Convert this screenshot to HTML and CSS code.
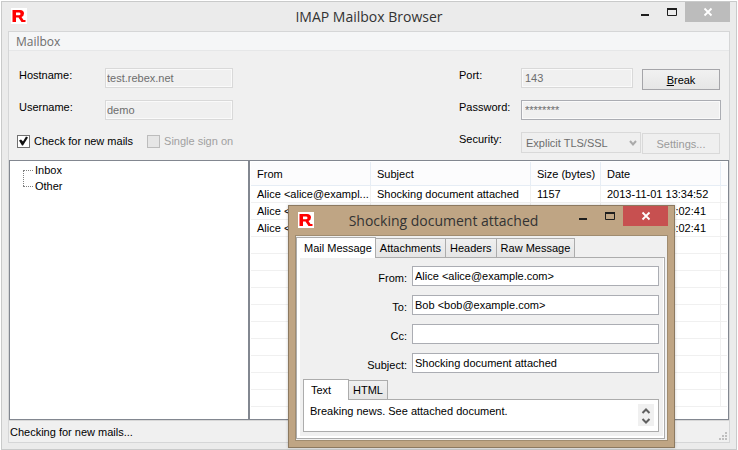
FILE: index.html
```html
<!DOCTYPE html>
<html lang="en">
<head>
<meta charset="utf-8">
<title>IMAP Mailbox Browser</title>
<link rel="stylesheet" href="styles.css">
</head>
<body>
<main class="window">
  <header class="titlebar">
    <svg class="logo" viewBox="0 0 16 16" aria-hidden="true"><path class="logo-bg" d="M0 0h16v16H0z"/><path class="logo-mark" fill-rule="evenodd" d="M1.500 2H9Q13 2 13 5.500Q13 8 10.500 9L12.500 12H14.500v2H10.500L7.500 9.500H5V14H1.500zM5 4.500V7.300H8Q9.500 7.300 9.500 5.900Q9.500 4.500 8 4.500z"/></svg>
    <h1 class="title">IMAP Mailbox Browser</h1>
    <div class="caption-buttons">
      <button class="caption" aria-label="Minimize"><svg viewBox="0 0 10 10"><path d="M1 8h8" stroke-width="2"/></svg></button>
      <button class="caption" aria-label="Maximize"><svg viewBox="0 0 10 10"><path d="M.5 1v7.500h9V1" /><path d="M0 2h10" stroke-width="2"/></svg></button>
      <button class="caption close" aria-label="Close"><svg viewBox="0 0 10 10"><path d="M1.500 1.500l7 7m0-7l-7 7" stroke-width="1.800"/></svg></button>
    </div>
  </header>
  <div class="frame">
    <nav class="menubar"><button class="menu" disabled>Mailbox</button></nav>
    <form class="connection">
      <div class="account">
        <label for="host">Hostname:</label><input id="host" class="field" value="test.rebex.net" disabled>
        <label for="user">Username:</label><input id="user" class="field" value="demo" disabled>
        <div class="checks">
          <label class="check"><input type="checkbox" checked>Check for new mails</label>
          <label class="check off"><input type="checkbox" disabled>Single sign on</label>
        </div>
      </div>
      <div class="server">
        <label for="port">Port:</label><input id="port" class="field port" value="143" disabled>
        <button type="button" class="button"><u>B</u>reak</button>
        <label for="pass">Password:</label><input id="pass" class="field password" value="********" readonly>
        <label for="security">Security:</label>
        <div class="select"><select id="security" disabled><option>Explicit TLS/SSL</option></select><svg viewBox="0 0 8 8" aria-hidden="true"><path d="M1 2l3 3.500L7 2"/></svg></div>
        <button type="button" class="button" disabled>Settings...</button>
      </div>
    </form>
    <div class="panes">
      <ul class="tree"><li>Inbox</li><li>Other</li></ul>
      <div class="list">
        <table class="messages">
          <colgroup><col class="c-from"><col class="c-subject"><col class="c-size"><col class="c-date"><col></colgroup>
          <thead><tr><th>From</th><th>Subject</th><th>Size (bytes)</th><th>Date</th><th></th></tr></thead>
          <tbody>
            <tr><td>Alice &lt;alice@exampl...</td><td>Shocking document attached</td><td>1157</td><td>2013-11-01 13:34:52</td><td></td></tr>
            <tr><td>Alice &lt;</td><td></td><td></td><td class="tail">3:02:41</td><td></td></tr>
            <tr><td>Alice &lt;</td><td></td><td></td><td class="tail">3:02:41</td><td></td></tr>
            <tr><td></td><td></td><td></td><td></td><td></td></tr>
            <tr><td></td><td></td><td></td><td></td><td></td></tr>
            <tr><td></td><td></td><td></td><td></td><td></td></tr>
            <tr><td></td><td></td><td></td><td></td><td></td></tr>
            <tr><td></td><td></td><td></td><td></td><td></td></tr>
            <tr><td></td><td></td><td></td><td></td><td></td></tr>
            <tr><td></td><td></td><td></td><td></td><td></td></tr>
            <tr><td></td><td></td><td></td><td></td><td></td></tr>
            <tr><td></td><td></td><td></td><td></td><td></td></tr>
            <tr><td></td><td></td><td></td><td></td><td></td></tr>
          </tbody>
        </table>
      </div>
    </div>
    <footer class="status"><span>Checking for new mails...</span>
      <svg class="grip" viewBox="0 0 8 8" aria-hidden="true"><path d="M6 0h2v2H6zM3 3h2v2H3zM6 3h2v2H6zM0 6h2v2H0zM3 6h2v2H3zM6 6h2v2H6z"/></svg>
    </footer>
  </div>
</main>

<section class="dialog" role="dialog" aria-labelledby="dialog-title">
  <header class="titlebar">
    <svg class="logo" viewBox="0 0 16 16" aria-hidden="true"><path class="logo-bg" d="M0 0h16v16H0z"/><path class="logo-mark" fill-rule="evenodd" d="M1.500 2H9Q13 2 13 5.500Q13 8 10.500 9L12.500 12H14.500v2H10.500L7.500 9.500H5V14H1.500zM5 4.500V7.300H8Q9.500 7.300 9.500 5.900Q9.500 4.500 8 4.500z"/></svg>
    <h2 class="title" id="dialog-title">Shocking document attached</h2>
    <div class="caption-buttons">
      <button class="caption" aria-label="Minimize"><svg viewBox="0 0 10 10"><path d="M1 8h8" stroke-width="2"/></svg></button>
      <button class="caption" aria-label="Maximize"><svg viewBox="0 0 10 10"><path d="M.5 1v7.500h9V1" /><path d="M0 2h10" stroke-width="2"/></svg></button>
      <button class="caption close" aria-label="Close"><svg viewBox="0 0 10 10"><path d="M1.500 1.500l7 7m0-7l-7 7" stroke-width="1.800"/></svg></button>
    </div>
  </header>
  <div class="dialog-body">
    <div class="tabs" role="tablist">
      <button class="tab selected" role="tab" aria-selected="true">Mail Message</button>
      <button class="tab" role="tab">Attachments</button>
      <button class="tab" role="tab">Headers</button>
      <button class="tab" role="tab">Raw Message</button>
    </div>
    <div class="sheet">
      <div class="sheet-inner">
        <form class="mail">
          <label for="from">From:</label><input id="from" class="box" value="Alice &lt;alice@example.com&gt;">
          <label for="to">To:</label><input id="to" class="box" value="Bob &lt;bob@example.com&gt;">
          <label for="cc">Cc:</label><input id="cc" class="box">
          <label for="subject">Subject:</label><input id="subject" class="box" value="Shocking document attached">
        </form>
        <div class="tabs content-tabs" role="tablist">
          <button class="tab selected" role="tab" aria-selected="true">Text</button>
          <button class="tab" role="tab">HTML</button>
        </div>
        <div class="message">
          <textarea aria-label="Message text" rows="1">Breaking news. See attached document.</textarea>
          <div class="scroller"><svg viewBox="0 0 16 22" aria-hidden="true"><path d="M4.500 9L8 5.500L11.500 9M4.500 15L8 18.500L11.500 15"/></svg></div>
        </div>
      </div>
    </div>
  </div>
</section>
</body>
</html>
```
FILE: styles.css
```css
* { box-sizing: border-box; }
body {
  margin: 0;
  padding: 1px;
  padding-bottom: 0;
  background: #fff;
  color: #000;
  font: 11px/16px "Liberation Sans", Arial, sans-serif;
}
button, input, select, textarea { font: inherit; color: inherit; margin: 0; border-radius: 0; }

.window {
  display: flex;
  flex-direction: column;
  min-height: calc(100vh - 1px);
  padding: 0 6px 6px;
  border: 1px solid #c9caca;
  background: #ebebeb;
}
.titlebar { display: flex; height: 29px; align-items: flex-start; }
.logo { flex: none; width: 16px; height: 16px; margin: 6px 0 0 3px; }
.logo-bg { fill: #fff; }
.logo-mark { fill: #f00; }
.title {
  flex: 1;
  margin: 0;
  padding-left: 80px;
  text-align: center;
  font: 14px/29px "Open Sans", "Noto Sans", sans-serif;
  color: #333;
  white-space: nowrap;
}
.caption-buttons { display: flex; }
.caption {
  display: flex;
  width: 27px;
  height: 20px;
  padding: 0;
  align-items: center;
  justify-content: center;
  border: 0;
  background: none;
}
.caption svg { width: 10px; height: 10px; fill: none; stroke: #1e1e1e; }
.caption.close { width: 45px; background: #bcbcbc; }
.caption.close svg { stroke: #fff; }

.frame { display: flex; flex: 1; flex-direction: column; border: 1px solid #d5d6d7; background: #f0f0f0; }
.menubar { height: 19px; border-bottom: 1px solid #e6e7e8; background: #f5f6f7; }
.menu { padding: 0 7px; border: 0; background: none; color: #6d6d6d; font: 12px/19px "Open Sans", sans-serif; }

.connection { display: flex; justify-content: space-between; padding: 17px 8px 8px 8px; }
.account, .server { display: grid; grid-auto-rows: 20px; row-gap: 12px; align-items: start; }
.account { grid-template-columns: 88px 128px; }
.server { grid-template-columns: 62px 121px 79px; }
.account > label, .server > label { line-height: 14px; }
.account > label { padding-left: 2px; }
.field {
  width: 100%;
  height: 20px;
  padding: 0 1px;
  border: 1px solid #d9d9d9;
  outline: 1px solid #fafafa;
  outline-offset: -2px;
  background: #f0f0f0;
  color: #6d6d6d;
}
.server .field { padding: 0 3px; }
.port { width: 112px; }
.server .password { grid-column: span 2; width: 200px; border-color: #abadb3; }
.checks { display: flex; grid-column: span 2; gap: 14px; padding-top: 1px; }
.check { display: flex; align-items: center; gap: 4px; white-space: nowrap; }
.check input {
  display: grid;
  place-content: center;
  width: 13px;
  height: 13px;
  appearance: none;
  border: 1px solid #707070;
  background: #fff;
}
.check input:checked::before {
  content: "";
  width: 11px;
  height: 11px;
  background: #111;
  clip-path: polygon(1px 5px, 3px 4px, 5px 6px, 8px 1px, 10px 2px, 5px 10px, 4px 10px);
}
.check.off { color: #a0a0a0; }
.check.off input { border-color: #bcbcbc; background: #e6e6e6; }
.button {
  width: 78px;
  height: 21px;
  margin-top: 1px;
  padding: 0;
  border: 1px solid #a5a5a9;
  background: linear-gradient(#f1f1f1, #e6e6e6);
  line-height: 18px;
}
.button:disabled { border-color: #d9d9d9; background: #efefef; color: #9b9b9b; }
.select { position: relative; width: 120px; }
.select select {
  display: block;
  width: 100%;
  height: 21px;
  padding: 0 4px;
  appearance: none;
  border: 1px solid #d9d9d9;
  background: #efefef;
  color: #6d6d6d;
  opacity: 1;
}
.select svg { position: absolute; top: 7px; right: 4px; width: 8px; height: 8px; fill: none; stroke: #aaa; stroke-width: 2; }

.panes { display: flex; flex: 1; border: 1px solid #828790; }
.tree {
  flex: none;
  width: 240px;
  margin: 0;
  padding: 1px 0 0 13px;
  border-right: 2px solid #828790;
  background: #fff;
  list-style: none;
}
.tree li { position: relative; height: 16px; padding-left: 12px; }
.tree li::before { content: ""; position: absolute; left: 0; top: 8px; width: 10px; border-top: 1px dotted #808080; }
.tree li + li::after { content: ""; position: absolute; left: 0; top: -8px; height: 16px; border-left: 1px dotted #808080; }
.list { flex: 1; min-width: 0; padding: 1px; background: #fff; }
.messages { width: 100%; table-layout: fixed; border-collapse: separate; border-spacing: 0; }
.c-from { width: 120px; }
.c-subject { width: 160px; }
.c-size { width: 70px; }
.c-date { width: 120px; }
.messages th, .messages td {
  padding: 0 0 0 6px;
  border-right: 1px solid #f0f0f0;
  border-bottom: 1px solid #f0f0f0;
  text-align: left;
  font-weight: normal;
  white-space: nowrap;
}
.messages th { height: 24px; border-color: #e6edf5; background: #fcfcfd; }
.messages td { height: 17px; }
.messages .tail { padding-right: 14px; text-align: right; }
.messages th:last-child, .messages td:last-child { padding: 0; border-right: 0; }

.status { display: flex; height: 22px; justify-content: space-between; align-items: center; padding: 0 1px; border-top: 1px solid #d7d7d7; }
.grip { align-self: flex-end; width: 8px; height: 8px; margin: 0 1px 2px 0; fill: #bfbfbf; }

.dialog {
  position: absolute;
  left: 288px;
  top: 205px;
  width: 387px;
  padding: 0 6px 6px;
  border: 1px solid #8c7960;
  background: #bfa584;
  box-shadow: 0 0 3px rgba(0, 0, 0, .2);
}
.dialog .title { padding-left: 4px; }
.dialog .caption.close { background: #c75050; }
.dialog-body { padding: 1px 2px 1px 0; border: 1px solid #a08c70; background: #f0f0f0; }
.tabs { position: relative; z-index: 1; display: flex; align-items: flex-end; margin-bottom: -1px; }
.tab {
  height: 19px;
  margin-bottom: 1px;
  padding: 0 4px;
  border: 1px solid #acacac;
  border-left-width: 0;
  border-bottom: 0;
  background: linear-gradient(#f0f0f0, #e5e5e5);
  line-height: 18px;
}
.tab.selected {
  min-width: 46px;
  height: 21px;
  margin-bottom: 0;
  padding: 0 3px 0 7px;
  border-left-width: 1px;
  background: #fff;
  text-align: left;
}
.sheet { padding: 0 1px 2px 3px; border: 1px solid #acacac; background: #fff; }
.sheet-inner { padding: 8px 4px 4px 3px; background: #f0f0f0; }
.mail { display: grid; grid-template-columns: 104px 1fr; gap: 9px 5px; }
.mail label { padding-top: 4px; text-align: right; }
.box { width: 100%; height: 20px; padding: 0 2px; border: 1px solid #abadb3; background: #fff; }
.content-tabs { margin-top: 6px; }
.message { display: flex; height: 33px; padding: 4px; border: 1px solid #acacac; background: #fff; }
.message textarea { flex: 1; height: 18px; padding: 0 2px; overflow: hidden; resize: none; border: 0; background: none; line-height: 14px; }
.scroller { width: 16px; height: 22px; background: #f0f0f0; }
.scroller svg { display: block; width: 16px; height: 22px; fill: none; stroke: #606060; stroke-width: 2; }
```
